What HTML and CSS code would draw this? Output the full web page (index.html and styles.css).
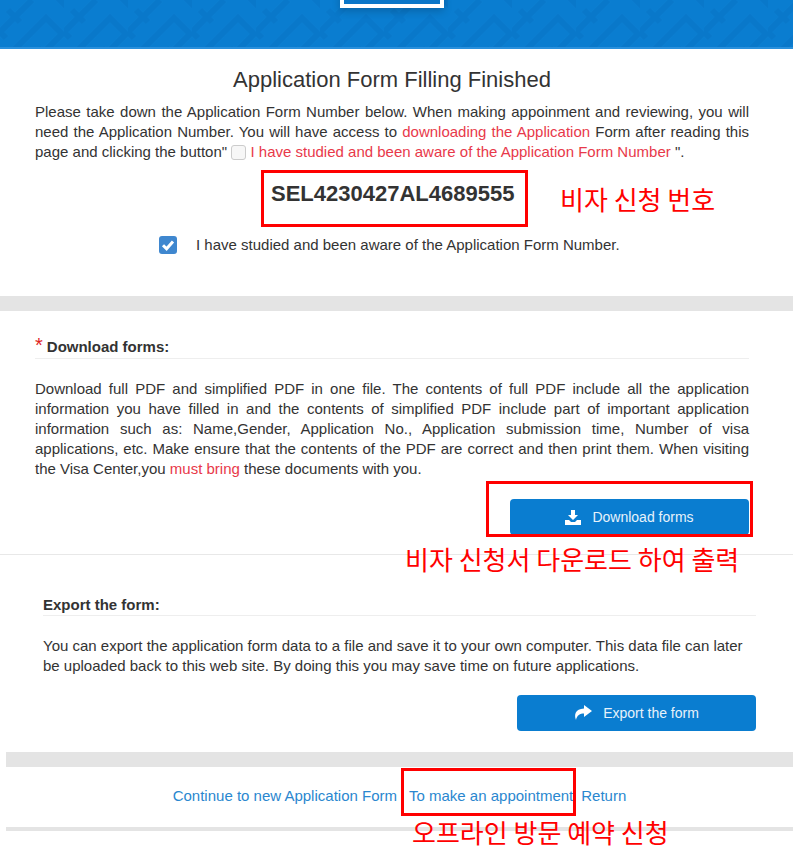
FILE: index.html
```html
<!DOCTYPE html>
<html>
<head>
<meta charset="utf-8">
<title>Application Form Filling Finished</title>
<link rel="stylesheet" href="styles.css">
</head>
<body>
<div class="page">
	<div class="banner">
		<svg class="banner-bg" width="100%" height="47">
			<defs>
				<pattern id="maze" width="64" height="64" patternUnits="userSpaceOnUse">
					<path d="M-8 40L32 0M2 62L46 18L64 36M24 72L64 32M8 10L20 22M38 48L54 64M-6 26L6 38M56 -4L68 8" fill="none" stroke="#0978ca" stroke-width="6"/>
				</pattern>
			</defs>
			<rect width="100%" height="47" fill="url(#maze)"/>
		</svg>
		<div class="logo-box"></div>
	</div>

	<div class="finish">
		<h1>Application Form Filling Finished</h1>
		<p class="text">Please take down the Application Form Number below. When making appoinment and reviewing, you will need the Application Number. You will have access to <span class="red">downloading the Application</span> Form after reading this page and clicking the button" <span class="small-check"></span> <span class="red">I have studied and been aware of the Application Form Number</span> ".</p>
		<div class="number-row">
			<div class="number">SEL4230427AL4689555</div>
			<div class="mark mark-number"></div>
			<div class="note note-number">비자 신청 번호</div>
		</div>
		<div class="agree">
			<svg class="check" width="18" height="18" viewBox="0 0 18 18">
				<rect width="18" height="18" rx="3" fill="#3f87cf"/>
				<path d="M4 9.2L7.6 12.8L14 5.6" fill="none" stroke="#fff" stroke-width="3"/>
			</svg>
			<span>I have studied and been aware of the Application Form Number.</span>
		</div>
	</div>

	<div class="band"></div>

	<div class="section download">
		<div class="sec-title"><i>*</i>Download forms:</div>
		<p class="text">Download full PDF and simplified PDF in one file. The contents of full PDF include all the application information you have filled in and the contents of simplified PDF include part of important application information such as: Name,Gender, Application No., Application submission time, Number of visa applications, etc. Make ensure that the contents of the PDF are correct and then print them. When visiting the Visa Center,you <span class="red">must bring</span> these documents with you.</p>
		<div class="btn-row">
			<a class="btn">
				<svg width="16" height="15" viewBox="0 0 16 15"><path d="M6 0H10V5H13L8 10L3 5H6ZM0 10H4L6 12H10L12 10H16V15H0Z" fill="#fff"/></svg>
				Download forms
			</a>
			<div class="mark mark-download"></div>
		</div>
		<div class="note note-download">비자 신청서 다운로드 하여 출력</div>
	</div>

	<div class="section export">
		<div class="sec-title">Export the form:</div>
		<p class="text left">You can export the application form data to a file and save it to your own computer. This data file can later be uploaded back to this web site. By doing this you may save time on future applications.</p>
		<div class="btn-row">
			<a class="btn">
				<svg width="18" height="16" viewBox="0 0 18 16"><path d="M10 0L18 6L10 12V8.500C6 8.500 3 10 2 15C0 10 1 4 10 3.500Z" fill="#fff"/></svg>
				Export the form
			</a>
		</div>
	</div>

	<div class="band band-inset"></div>

	<div class="links">
		<a>Continue to new Application Form</a>
		<a class="appoint">To make an appointment<span class="mark mark-appoint"></span></a>
		<a>Return</a>
	</div>

	<div class="foot">
		<div class="note note-appoint">오프라인 방문 예약 신청</div>
	</div>
</div>
</body>
</html>
```

FILE: styles.css
```css
*{ margin:0; padding:0; box-sizing:border-box;}
body{ font:15px/20px "Liberation Sans",Arial,sans-serif; color:#333; background:#fff;}
.page{ width:793px; height:862px; overflow:hidden; position:relative;}

.banner{ height:49px; background:#0a7dd0; border-bottom:2px solid #2a90dc; position:relative;}
.banner-bg{ display:block;}
.logo-box{ position:absolute; left:340px; top:-10px; width:104px; height:18px; background:#0a76c8; border:4px solid #fff; box-shadow:0 3px 8px rgba(0,0,0,.2);}

.finish{ padding:19px 44px 0 35px; height:247px;}
.finish h1{ font-size:22px; font-weight:normal; line-height:24px; text-align:center; margin-bottom:10px;}
.text{ text-align:justify;}
.text.left{ text-align:left;}
.red{ color:#e8394a;}
.small-check{ display:inline-block; width:15px; height:15px; border:1px solid #ccc; border-radius:3px; background:#f7f7f7; vertical-align:-3px;}

.number-row{ position:relative; height:56px; margin-top:8px;}
.number{ font-size:22px; font-weight:bold; line-height:24px; padding:12px 0 0 236px;}
.agree{ display:flex; align-items:center; margin-top:9px; padding-left:124px;}
.check{ margin-right:19px;}

.mark{ position:absolute; border:3px solid #f00;}
.mark-number{ left:226px; top:0; width:267px; height:57px;}
.note{ position:absolute; color:#f00; font:26px/32px "Noto Sans CJK KR",sans-serif; white-space:nowrap;}
.note-number{ left:525px; top:13px;}

.band{ height:15px; background:#e4e4e4;}
.band-inset{ margin-left:6px;}

.section{ position:relative;}
.sec-title{ font-weight:bold; line-height:20px; border-bottom:1px solid #eee; padding-bottom:2px;}
.sec-title i{ color:#e01f1f; font-size:20px; font-style:normal; font-weight:normal; margin-right:4px;}

.download{ height:244px; padding:24px 44px 0 35px; border-bottom:1px solid #e8e8e8;}
.download .sec-title{ padding-bottom:1px;}
.download .text{ margin-top:20px;}
.download .btn-row{ margin-top:20px;}
.export{ height:197px; padding:40px 37px 0 43px;}
.export .sec-title{ padding-bottom:0;}
.export .text{ margin-top:20px;}
.export .btn-row{ margin-top:19px;}

.btn-row{ display:flex; justify-content:flex-end; position:relative;}
.btn{ display:flex; align-items:center; justify-content:center; gap:11px; width:239px; height:36px; background:#0a7dd0; color:#e6f2fb; border-radius:4px; font-size:14px;}
.mark-download{ right:-4px; top:-18px; width:267px; height:56px;}
.note-download{ left:405px; top:232px;}

.links{ position:relative; display:flex; justify-content:center; gap:8px; margin-left:6px; padding-top:19px; height:60px; color:#2a87cf;}
.appoint{ position:relative; margin-left:4px;}
.mark-appoint{ left:-8px; top:-18px; width:175px; height:48px;}
.foot{ margin-left:6px; height:4px; background:#e4e4e4; position:relative;}
.note-appoint{ left:406px; top:-11px;}
```
